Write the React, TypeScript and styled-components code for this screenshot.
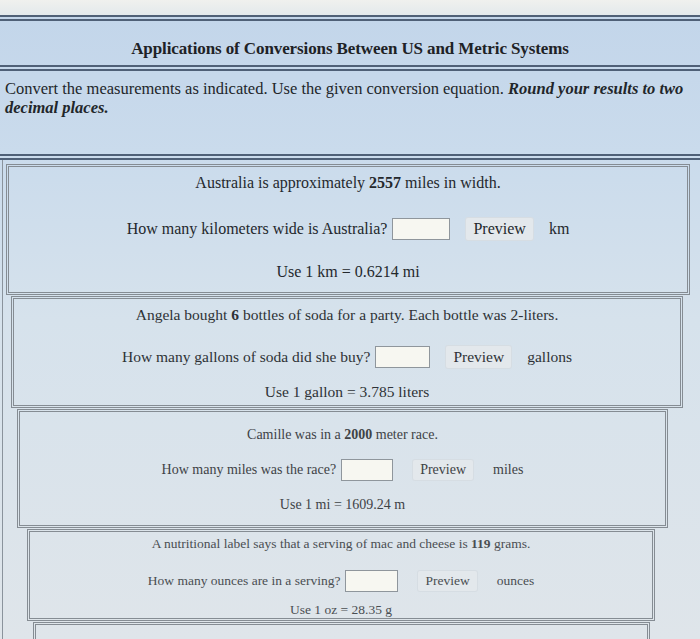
import * as React from "react";
import styled, { createGlobalStyle } from "styled-components";

const GlobalStyle = createGlobalStyle`
  html, body {
    margin: 0;
    padding: 0;
  }
  body {
    background: #dde4ea;
  }
`;

const Page = styled.div`
  width: 700px;
  height: 639px;
  overflow: hidden;
  font-family: "Liberation Serif", "Times New Roman", serif;
  color: #262a2e;
  background: linear-gradient(180deg, #c2d5ea 0%, #cadbec 24%, #d6e2ec 50%, #dfe5ea 100%);
`;

const TopStrip = styled.div`
  height: 15px;
  background: linear-gradient(180deg, #f0f1ee, #e3e9ec);
`;

const Rule = styled.div`
  border-top: 6px double #4f6077;
`;

const Title = styled.h1`
  margin: 0;
  padding-top: 18px;
  height: 26px;
  font-size: 17px;
  font-weight: bold;
  text-align: center;
  letter-spacing: -0.1px;
  color: #1e2226;
`;

const Instructions = styled.div`
  padding: 8px 8px 0 5px;
  font-size: 16.5px;
  line-height: 19px;
  height: 75px;
  color: #22262a;
  white-space: nowrap;

  em {
    font-weight: bold;
  }
`;

const Problems = styled.div`
  display: flex;
  flex-direction: column;
  gap: 1px;
  padding-top: 4px;
  border-left: 1px solid #8a939c;
  margin-left: 2px;
`;

const Problem = styled.section<{
  $left: number;
  $right: number;
  $size: number;
  $top: number;
  $gap1: number;
  $gap2: number;
  $bottom: number;
  $ink: string;
}>`
  margin-left: ${(p) => p.$left}px;
  margin-right: ${(p) => p.$right}px;
  border: 3px double #858c93;
  padding-top: ${(p) => p.$top}px;
  padding-bottom: ${(p) => p.$bottom}px;
  font-size: ${(p) => p.$size}px;
  line-height: ${(p) => p.$size + 2}px;
  color: ${(p) => p.$ink};
  display: flex;
  flex-direction: column;
  align-items: center;

  & > :nth-child(2) {
    margin-top: ${(p) => p.$gap1}px;
  }
  & > :nth-child(3) {
    margin-top: ${(p) => p.$gap2}px;
  }
`;

const Line = styled.div`
  white-space: nowrap;

  b {
    font-weight: bold;
  }
`;

const AnswerRow = styled.div<{ $w: number }>`
  display: flex;
  align-items: center;
  white-space: nowrap;
  height: 24px;

  input {
    width: ${(p) => p.$w}px;
  }
`;

const AnswerBox = styled.input`
  box-sizing: border-box;
  height: 22px;
  margin: 0 0 0 5px;
  border: 1px solid #8f969c;
  background: #f7f7f1;
`;

const PreviewButton = styled.button<{ $pad: number }>`
  font-family: inherit;
  font-size: inherit;
  color: inherit;
  margin-left: ${(p) => p.$pad}px;
  padding: 2px 7px;
  border: none;
  border-radius: 2px;
  background: #e3e8ec;
  box-shadow: 0 0 0 1px #d6dde3;
`;

const Unit = styled.span<{ $pad: number }>`
  margin-left: ${(p) => p.$pad}px;
`;

const LastBox = styled.div`
  margin: 0 50px 0 30px;
  height: 18px;
  border: 3px double #858c93;
`;

type Item = {
  story: React.ReactNode;
  question: string;
  unit: string;
  hint: string;
  left: number;
  right: number;
  size: number;
  top: number;
  gap1: number;
  gap2: number;
  bottom: number;
  ink: string;
  inputW: number;
  pad: number;
};

const items: Item[] = [
  {
    story: (
      <>
        Australia is approximately <b>2557</b> miles in width.
      </>
    ),
    question: "How many kilometers wide is Australia?",
    unit: "km",
    hint: "Use 1 km = 0.6214 mi",
    left: 3,
    right: 10,
    size: 16,
    top: 7,
    gap1: 25,
    gap2: 22,
    bottom: 11,
    ink: "#24282c",
    inputW: 58,
    pad: 16,
  },
  {
    story: (
      <>
        Angela bought <b>6</b> bottles of soda for a party. Each bottle was 2-liters.
      </>
    ),
    question: "How many gallons of soda did she buy?",
    unit: "gallons",
    hint: "Use 1 gallon = 3.785 liters",
    left: 8,
    right: 17,
    size: 15.5,
    top: 7,
    gap1: 21,
    gap2: 14,
    bottom: 5,
    ink: "#2e3236",
    inputW: 55,
    pad: 16,
  },
  {
    story: (
      <>
        Camille was in a <b>2000</b> meter race.
      </>
    ),
    question: "How many miles was the race?",
    unit: "miles",
    hint: "Use 1 mi = 1609.24 m",
    left: 14,
    right: 32,
    size: 14,
    top: 15,
    gap1: 15,
    gap2: 15,
    bottom: 12,
    ink: "#3e4246",
    inputW: 52,
    pad: 20,
  },
  {
    story: (
      <>
        A nutritional label says that a serving of mac and cheese is <b>119</b> grams.
      </>
    ),
    question: "How many ounces are in a serving?",
    unit: "ounces",
    hint: "Use 1 oz = 28.35 g",
    left: 24,
    right: 45,
    size: 13.5,
    top: 4,
    gap1: 17,
    gap2: 9,
    bottom: 1,
    ink: "#4a4e52",
    inputW: 53,
    pad: 20,
  },
];

export default function App() {
  return (
    <>
      <GlobalStyle />
      <Page>
        <TopStrip />
        <Rule />
        <Title>Applications of Conversions Between US and Metric Systems</Title>
        <Rule />
        <Instructions>
          <div>
            Convert the measurements as indicated. Use the given conversion equation.{" "}
            <em>Round your results to two</em>
          </div>
          <div>
            <em>decimal places.</em>
          </div>
        </Instructions>
        <Rule />
        <Problems>
          {items.map((it, i) => (
            <Problem
              key={i}
              $left={it.left}
              $right={it.right}
              $size={it.size}
              $top={it.top}
              $gap1={it.gap1}
              $gap2={it.gap2}
              $bottom={it.bottom}
              $ink={it.ink}
            >
              <Line>{it.story}</Line>
              <AnswerRow $w={it.inputW}>
                {it.question}
                <AnswerBox type="text" />
                <PreviewButton $pad={it.pad}>Preview</PreviewButton>
                <Unit $pad={it.pad}>{it.unit}</Unit>
              </AnswerRow>
              <Line>{it.hint}</Line>
            </Problem>
          ))}
          <LastBox />
        </Problems>
      </Page>
    </>
  );
}
